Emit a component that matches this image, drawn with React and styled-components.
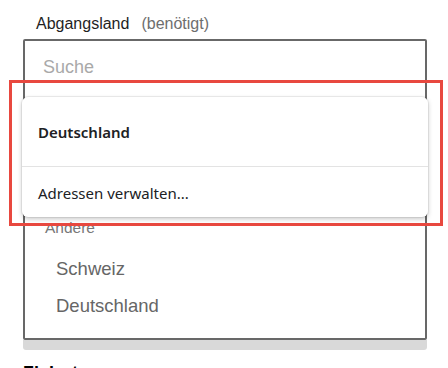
import React from 'react'
import styled, { createGlobalStyle } from 'styled-components'

const GlobalStyle = createGlobalStyle`
  html, body {
    margin: 0;
    padding: 0;
    background: #fff;
  }
  body {
    font-family: "Liberation Sans", Arial, sans-serif;
    overflow: hidden;
  }
`

const Page = styled.div`
  position: relative;
  width: 448px;
  height: 368px;
  overflow: hidden;
  padding: 15px 0 0 23px;
  box-sizing: border-box;
`

const Field = styled.div`
  width: 404px;
`

const Label = styled.div`
  display: flex;
  align-items: baseline;
  gap: 12px;
  padding-left: 13px;
  height: 18px;
  line-height: 18px;
  margin-bottom: 6px;
  font-size: 16px;
  color: #1f1f1f;

  span {
    color: #6e6e6e;
  }
`

const SelectBox = styled.div`
  border: 2px solid #686868;
  border-radius: 2px;
  height: 301px;
  box-sizing: border-box;
  display: flex;
  flex-direction: column;
`

const Search = styled.div`
  height: 52px;
  line-height: 52px;
  padding-left: 18px;
  font-size: 18px;
  color: #a9a9a9;
`

const OptionList = styled.div`
  padding: 125px 0 14px;
`

const GroupLabel = styled.div`
  padding-left: 20px;
  height: 20px;
  line-height: 20px;
  font-size: 15.5px;
  color: #777;
  margin-bottom: 12px;
`

const Option = styled.div`
  padding-left: 31px;
  height: 37px;
  line-height: 37px;
  font-size: 18.5px;
  color: #666;
`

const Track = styled.div`
  height: 10px;
  background: #d9d9d9;
  border-radius: 0 0 3px 3px;
`

const NextLabel = styled.div`
  margin-top: 13px;
  font-size: 18px;
  font-weight: 700;
  color: #000;
`

const Popup = styled.div`
  position: absolute;
  left: 22px;
  top: 97px;
  width: 406px;
  height: 120px;
  background: #fff;
  border-radius: 6px;
  box-shadow: 0 0 0 1px rgba(0, 0, 0, 0.06), 0 2px 5px rgba(0, 0, 0, 0.22);
  display: flex;
  flex-direction: column;
  font-family: "Noto Sans", "Open Sans", sans-serif;
  color: #202124;
  overflow: hidden;
`

const PopupItem = styled.div`
  height: ${(p) => p.$h}px;
  display: flex;
  align-items: center;
  padding: 1px 16px 0;
  box-sizing: border-box;
  font-size: 15px;
  font-weight: ${(p) => (p.$bold ? 600 : 400)};
  border-top: ${(p) => (p.$divider ? '1px solid #e3e3e3' : 'none')};
`

const Highlight = styled.div`
  position: absolute;
  left: 9px;
  top: 80px;
  width: 434px;
  height: 146px;
  box-sizing: border-box;
  border: 3px solid #e8483f;
  pointer-events: none;
`

export default function App() {
  return (
    <>
      <GlobalStyle />
      <Page>
        <Field>
          <Label>
            Abgangsland <span>(benötigt)</span>
          </Label>
          <SelectBox>
            <Search>Suche</Search>
            <OptionList>
              <GroupLabel>Andere</GroupLabel>
              <Option>Schweiz</Option>
              <Option>Deutschland</Option>
            </OptionList>
          </SelectBox>
          <Track />
        </Field>
        <NextLabel>Zielort</NextLabel>

        <Popup>
          <PopupItem $h={69} $bold>Deutschland</PopupItem>
          <PopupItem $h={51} $divider>Adressen verwalten...</PopupItem>
        </Popup>
        <Highlight />
      </Page>
    </>
  )
}
